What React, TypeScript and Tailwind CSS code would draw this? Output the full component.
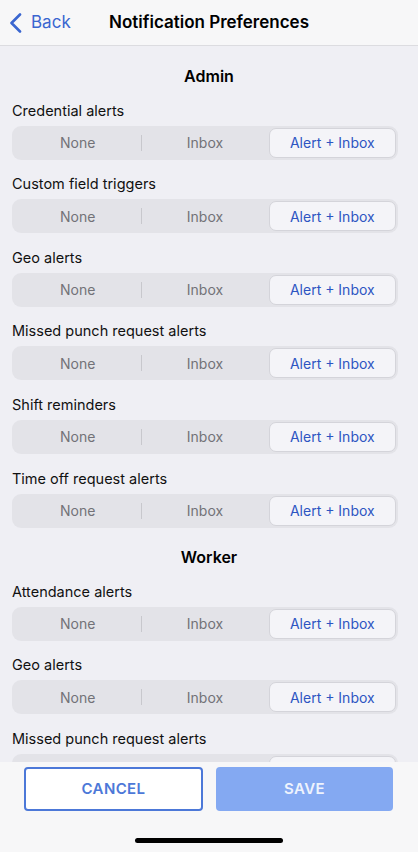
type Choice = 'none' | 'inbox' | 'alert';

const options: { key: Choice; label: string }[] = [
  { key: 'none', label: 'None' },
  { key: 'inbox', label: 'Inbox' },
  { key: 'alert', label: 'Alert + Inbox' },
];

const sections = [
  {
    title: 'Admin',
    items: [
      'Credential alerts',
      'Custom field triggers',
      'Geo alerts',
      'Missed punch request alerts',
      'Shift reminders',
      'Time off request alerts',
    ],
  },
  {
    title: 'Worker',
    items: ['Attendance alerts', 'Geo alerts', 'Missed punch request alerts'],
  },
];

function Segmented({ value }: { value: Choice }) {
  return (
    <div className="flex h-[34px] items-center rounded-[9px] bg-[#e3e3e8] p-[2px]">
      {options.map((opt, i) => {
        const active = opt.key === value;
        const showDivider = i > 0 && !active && options[i - 1].key !== value;
        return (
          <div key={opt.key} className="relative flex h-full flex-1 items-center justify-center">
            {showDivider && (
              <span className="absolute left-0 top-[7px] h-[16px] w-px bg-[#c8c8cd]" />
            )}
            {active ? (
              <div className="flex h-full w-full items-center justify-center rounded-[7px] border border-[#d4d4da] bg-[#f4f4f8] text-[14px] text-[#2d55c2]">
                {opt.label}
              </div>
            ) : (
              <span className="text-[14px] text-[#727277]">{opt.label}</span>
            )}
          </div>
        );
      })}
    </div>
  );
}

export default function App() {
  return (
    <div
      className="flex h-[852px] w-[418px] flex-col overflow-hidden bg-[#efeff4]"
      style={{ fontFamily: 'Inter, "Noto Sans", sans-serif' }}
    >
      <header className="relative flex h-[46px] shrink-0 items-center justify-center border-b border-[#dcdce0] bg-[#f7f7f8]">
        <div className="absolute left-[9px] top-0 flex h-full items-center text-[#3a66d0]">
          <svg width="13" height="20" viewBox="0 0 13 20" fill="none">
            <path d="M11 1.5L2.5 10L11 18.5" stroke="currentColor" strokeWidth="2.6" strokeLinecap="round" strokeLinejoin="round" />
          </svg>
          <span className="ml-[9px] text-[17px]">Back</span>
        </div>
        <h1 className="text-[17px] font-semibold text-black">Notification Preferences</h1>
      </header>

      <main className="flex-1 overflow-hidden pl-[12px] pr-[20px] pt-[20px]">
        {sections.map((section, si) => (
          <section key={section.title} className={si > 0 ? 'mt-[19.4px]' : ''}>
            <h2 className="h-[20px] pl-[8px] text-center text-[16px] font-semibold leading-[20px] text-black">
              {section.title}
            </h2>
            {section.items.map((item) => (
              <div key={item} className="mt-[14.6px]">
                <div className="mb-[5px] h-[20px] text-[14.5px] leading-[20px] text-[#111]">{item}</div>
                <Segmented value="alert" />
              </div>
            ))}
          </section>
        ))}
      </main>

      <footer className="flex h-[90px] shrink-0 flex-col bg-[#f7f7f8]">
        <div className="mt-[5px] flex gap-[13px] pl-[24px] pr-[25px]">
          <button className="h-[44px] w-[179px] rounded-[4px] border-2 border-[#4c78d8] bg-white text-[15px] font-semibold tracking-wide text-[#4c78d8]">
            CANCEL
          </button>
          <button className="h-[44px] flex-1 rounded-[4px] bg-[#84a9f2] text-[15px] font-semibold tracking-wide text-[#eef3fd]">
            SAVE
          </button>
        </div>
        <div className="mt-auto mb-[9px] flex justify-center">
          <span className="h-[5px] w-[148px] rounded-full bg-black" />
        </div>
      </footer>
    </div>
  );
}
